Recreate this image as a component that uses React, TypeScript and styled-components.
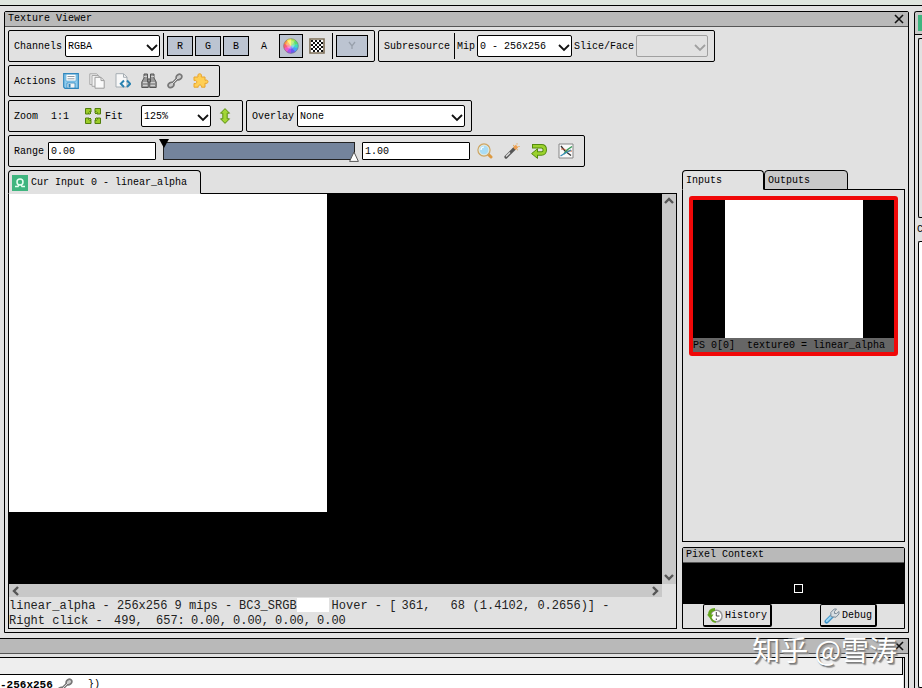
import React, { useState } from "react";
import styled, { createGlobalStyle } from "styled-components";

const GlobalStyle = createGlobalStyle`
  * { box-sizing: border-box; }
  html, body { margin: 0; height: 100%; background: #e1e1e1; }
  body, button, input, select {
    font-family: "Liberation Mono", "Noto Sans CJK SC", monospace;
    font-size: 10px;
    line-height: 14px;
    color: #000;
  }
`;

const Page = styled.div`
  position: relative;
  display: flex;
  flex-direction: column;
  height: 100vh;
  min-height: 600px;
  overflow: hidden;
`;
const TopStrip = styled.div`
  flex: none;
  height: 6px;
  background: #dfe6df;
  border-bottom: 1px solid #000;
`;
const Workspace = styled.div`
  flex: 1;
  min-height: 0;
  display: grid;
  grid-template-columns: minmax(0, 1fr) 8px;
  gap: 5px;
  padding-top: 5px;
`;
const LeftDocks = styled.div`
  display: flex;
  flex-direction: column;
  gap: 5px;
  min-height: 0;
`;
const Dock = styled.section`
  flex: 1;
  min-height: 0;
  display: flex;
  flex-direction: column;
  border: 1px solid #000;
  border-radius: 2px 2px 0 0;
  margin-left: 4px;
`;
const TitleBar = styled.header`
  flex: none;
  display: flex;
  align-items: center;
  justify-content: space-between;
  height: 15px;
  padding: 0 4px 0 3px;
  background: #b9b9b9;
  border-bottom: 1px solid #555;
`;
const Title = styled.h2`
  margin: 0;
  font-size: 10px;
  font-weight: normal;
`;
const CloseButton = styled.button`
  display: flex;
  padding: 0;
  border: 0;
  background: none;
`;
const DockBody = styled.div`
  flex: 1;
  min-height: 0;
  display: flex;
  flex-direction: column;
  gap: 3px;
  padding: 3px;
`;
const ToolRow = styled.div`
  flex: none;
  display: flex;
  gap: 3px;
`;
const ToolBox = styled.div<{ $gap?: number }>`
  display: flex;
  align-items: center;
  gap: ${(p) => p.$gap ?? 3}px;
  height: 32px;
  padding: 0 6px 0 5px;
  border: 1px solid #000;
  border-radius: 2px;
  white-space: pre;
`;
const Separator = styled.span`
  width: 1px;
  height: 26px;
  background: #000;
`;
const ButtonGroup = styled.div<{ $gap?: number }>`
  display: flex;
  align-items: center;
  gap: ${(p) => p.$gap ?? 2}px;
`;
const ToggleButton = styled.button<{ $on?: boolean; $w?: number; $h?: number }>`
  display: flex;
  align-items: center;
  justify-content: center;
  width: ${(p) => p.$w ?? 26}px;
  height: ${(p) => p.$h ?? 20}px;
  padding: ${(p) => (p.$h ? "0" : "2px 0 0")};
  background: ${(p) => (p.$on ? "#bcc4d1" : "transparent")};
  border: 1px solid ${(p) => (p.$on ? "#000" : "transparent")};
`;
const IconButton = styled.button`
  display: flex;
  align-items: center;
  padding: 0;
  border: 0;
  background: none;
`;
const SelectWrap = styled.span<{ $w: number }>`
  position: relative;
  width: ${(p) => p.$w}px;
  height: 22px;
`;
const Select = styled.select`
  appearance: none;
  display: block;
  width: 100%;
  height: 100%;
  padding: 2px 16px 0 2px;
  border: 1px solid #000;
  border-radius: 2px;
  background: #fff;
  opacity: 1;
  &:disabled { background: #e1e1e1; border-color: #a0a0a0; }
`;
const Chevron = styled.svg`
  position: absolute;
  right: 2px;
  top: 8px;
  pointer-events: none;
`;
const RangeInput = styled.input`
  width: 108px;
  height: 18px;
  padding: 0 2px;
  border: 1px solid #000;
  border-radius: 1px;
  background: #fff;
`;
const RangeBar = styled.div`
  position: relative;
  width: 192px;
  height: 18px;
  margin: 0 3px;
  background: #74849c;
  border: 1px solid #222;
`;
const RangeThumb = styled.svg<{ $end?: boolean }>`
  position: absolute;
  ${(p) => (p.$end ? "right: -5px; bottom: -3px;" : "left: -5px; top: -4px;")}
`;
const RangeSlider = styled.input<{ $end?: boolean }>`
  position: absolute;
  left: 0;
  top: ${(p) => (p.$end ? "50%" : "0")};
  width: 100%;
  height: 50%;
  margin: 0;
  opacity: 0;
`;
const Panels = styled.div`
  flex: 1;
  min-height: 0;
  display: grid;
  grid-template-columns: minmax(0, 1fr) 223px;
  gap: 5px;
`;
const Column = styled.div`
  display: flex;
  flex-direction: column;
  min-width: 0;
  min-height: 0;
`;
const Tabs = styled.div`
  flex: none;
  display: flex;
`;
const Tab = styled.button<{ $active?: boolean; $w: number; $h: number }>`
  z-index: 1;
  display: flex;
  align-items: center;
  gap: 3px;
  width: ${(p) => p.$w}px;
  height: ${(p) => p.$h}px;
  margin-bottom: -1px;
  padding: 1px 3px 0;
  border: 1px solid #000;
  border-bottom-color: ${(p) => (p.$active ? "#e1e1e1" : "#000")};
  border-radius: 4px 4px 0 0;
  background: ${(p) => (p.$active ? "#e1e1e1" : "#c9c9c9")};
  white-space: pre;
`;
const TabPanel = styled.div`
  flex: 1;
  min-height: 0;
  display: flex;
  flex-direction: column;
  border: 1px solid #000;
`;
const Scroller = styled.div`
  flex: 1;
  min-height: 0;
  display: grid;
  grid-template: minmax(0, 1fr) 13px / minmax(0, 1fr) 14px;
`;
const Viewport = styled.div`
  background: #000;
  overflow: hidden;
`;
const Texture = styled.div`
  width: 318px;
  height: 318px;
  background: #fff;
`;
const ScrollBar = styled.div<{ $vertical?: boolean }>`
  display: flex;
  flex-direction: ${(p) => (p.$vertical ? "column" : "row")};
  align-items: center;
  justify-content: space-between;
  padding: ${(p) => (p.$vertical ? "2px 0" : "0 2px")};
  background: #c8c8c8;
`;
const Status = styled.div`
  flex: none;
  padding-top: 1px;
  font-size: 12px;
  line-height: 15px;
  color: #222;
`;
const StatusLine = styled.div`
  display: flex;
  white-space: pre;
`;
const StatusText = styled.span<{ $w?: number }>`
  padding-top: 1px;
  margin-bottom: -1px;
  ${(p) => p.$w && `width: ${p.$w}px;`}
`;
const Swatch = styled.span`
  width: 32px;
  height: 14px;
  margin-right: 3px;
  background: #fff;
`;
const InputList = styled.div`
  padding: 6px;
`;
const Thumbnail = styled.button`
  display: block;
  width: 100%;
  padding: 0;
  border: 4px solid #f00808;
  border-radius: 3px;
  background: #000;
  text-align: left;
`;
const ThumbImage = styled.span`
  display: block;
  width: 138px;
  height: 138px;
  margin: 0 auto;
  background: #fff;
`;
const ThumbLabel = styled.span`
  display: block;
  height: 14px;
  padding-top: 1px;
  background: #666;
  white-space: pre;
`;
const PixelContext = styled.section`
  flex: none;
  margin-top: 5px;
  border: 1px solid #000;
  border-radius: 2px 2px 0 0;
`;
const PixelView = styled.div`
  display: flex;
  align-items: center;
  justify-content: center;
  height: 41px;
  padding: 10px 0 0 10px;
  background: #000;
`;
const PixelCursor = styled.span`
  width: 9px;
  height: 9px;
  border: 1px solid #fff;
`;
const PixelActions = styled.div`
  display: flex;
  justify-content: space-between;
  padding: 0 27px 1px 20px;
`;
const PushButton = styled.button`
  display: flex;
  align-items: center;
  gap: 2px;
  height: 23px;
  padding: 2px 3px 0;
  border: 1px solid #000;
  border-width: 1px 2px 2px 1px;
  border-radius: 2px;
  background: #e1e1e1;
`;
const LowerDock = styled.section`
  flex: none;
  height: 50px;
  display: flex;
  flex-direction: column;
  border: 1px solid #000;
  border-width: 1px 1px 0 0;
`;
const LowerBody = styled.div`
  flex: 1;
  display: flex;
  flex-direction: column;
  margin: 3px 3px 0 0;
  border: 1px solid #000;
  border-width: 1px 1px 0 0;
  padding-right: 1px;
`;
const LowerHeader = styled.div`
  flex: none;
  height: 17px;
  border: 1px solid #000;
  border-width: 0 1px 1px 0;
  background: #eee;
`;
const LowerLine = styled.div`
  flex: 1;
  display: flex;
  align-items: flex-start;
  gap: 3px;
  min-height: 0;
  padding-top: 3px;
  overflow: hidden;
  background: #fff;
  white-space: pre;
`;
const LowerName = styled.strong`
  width: 54px;
  font-size: 11px;
`;
const SideDock = styled.aside`
  display: flex;
  flex-direction: column;
  border: 1px solid #000;
  border-width: 1px 0 0 1px;
  border-radius: 3px 0 0 0;
  overflow: hidden;
`;
const SideTab = styled.div`
  flex: none;
  height: 23px;
  padding: 3px 0 0 3px;
  border-bottom: 1px solid #000;
  background: #c9c9c9;
`;
const SideMark = styled.div`
  height: 16px;
  background: #3fb57f;
`;
const SideBox = styled.div<{ $h?: number; $light?: boolean }>`
  ${(p) => (p.$h ? `flex: none; height: ${p.$h}px;` : "flex: 1;")}
  margin: 3px 0 0 3px;
  border: 1px solid #000;
  border-width: 1px 0 1px 1px;
  border-radius: 2px 0 0 2px;
  background: ${(p) => (p.$light ? "#fff" : "transparent")};
`;
const SideText = styled.div`
  flex: none;
  height: 20px;
  padding: 5px 0 0 2px;
  overflow: hidden;
`;
const Watermark = styled.div`
  position: absolute;
  right: 25px;
  bottom: 22px;
  font-family: "Noto Sans CJK SC", sans-serif;
  font-size: 28px;
  line-height: 34px;
  color: #fff;
  text-shadow: 1px 1px 1px #777, 2px 2px 1px #999;
  white-space: pre;
  pointer-events: none;
`;
const GroupLabel = styled.span`
  padding-top: 2px;
`;
const OneToOne = styled.button`
  padding: 2px 0 0;
  border: 0;
  background: none;
  margin: 0 13px 0 10px;
`;
const FitButton = styled(IconButton)`
  gap: 4px;
  margin-right: 15px;
`;
const ActionGroup = styled(ButtonGroup)`
  margin: 0 4px;
`;
const FlipGroup = styled(ButtonGroup)`
  margin: 0 3px;
`;
const RangeActions = styled(ButtonGroup)`
  margin: 0 4px 0 3px;
`;

const Icon = ({ children }: { children: React.ReactNode }) => (
  <svg width="16" height="16" viewBox="0 0 16 16" fill="none" aria-hidden="true">{children}</svg>
);
const CloseIcon = () => (
  <svg width="10" height="10" viewBox="0 0 10 10" stroke="#111" strokeWidth="1.6"><path d="M1 1L9 9M9 1L1 9" /></svg>
);
const SaveIcon = () => (
  <Icon>
    <path d="M.7.7H15.3V15.3H2L.7 14Z" fill="#8ccbee" stroke="#2f86bd" strokeWidth="1.2" />
    <path d="M3 1.3H13V8H3Z" fill="#fff" stroke="#4b9bcb" strokeWidth=".6" />
    <path d="M4.5 3.5H11.5M4.5 5.8H11.5" stroke="#8f9ba3" />
    <path d="M4 10H12V15H4Z" fill="#f2f5f7" stroke="#2f86bd" strokeWidth=".8" />
    <path d="M5.5 11H7.5V14.5H5.5Z" fill="#2f86bd" />
  </Icon>
);
const CopyIcon = () => (
  <Icon>
    <path d="M.8.8H7.5L10 3V11.5H.8Z" fill="#ededed" stroke="#a8a8a8" />
    <path d="M3 2.5H9L11 4.5V13.3H3Z" fill="#f2f2f2" stroke="#a8a8a8" />
    <path d="M6 4.3H12L15.2 7.5V15.2H6Z" fill="#fafafa" stroke="#9c9c9c" />
    <path d="M12 4.5V7.6H15" stroke="#9c9c9c" />
  </Icon>
);
const CodePageIcon = () => (
  <Icon>
    <path d="M1 .7H8.5L12 4V14H1Z" fill="#f8f8f8" stroke="#a5adb3" />
    <path d="M8.5 1V4.3H12" stroke="#a5adb3" />
    <path d="M9 7.5L5.8 10.8L9 14M12 7.5L15.2 10.8L12 14" stroke="#2a82b0" strokeWidth="2" />
  </Icon>
);
const BinocularsIcon = () => (
  <Icon>
    <path d="M3 1H6.5V5L7.3 7V14.5H.8V9L3 5ZM9.5 1H13V5L15.2 9V14.5H8.7V7L9.5 5Z" fill="#999" stroke="#555" />
    <path d="M3 3.5H6M10 3.5H13M2 9.5H6.5M9.5 9.5H14M2 12.5H6.5M9.5 12.5H14" stroke="#d0d0d0" />
    <path d="M6.5 6H9.5V9H6.5Z" fill="#888" stroke="#555" />
  </Icon>
);
const LinkIcon = () => (
  <Icon>
    <path d="M4.7 11.2L11.3 4.7" stroke="#777" strokeWidth="3" />
    <ellipse cx="4" cy="12" rx="3" ry="2.5" transform="rotate(-35 4 12)" stroke="#777" strokeWidth="1.7" fill="#ccc" />
    <ellipse cx="12" cy="4" rx="3" ry="2.5" transform="rotate(-35 12 4)" stroke="#777" strokeWidth="1.7" fill="#ccc" />
    <path d="M5 11L11 5" stroke="#ddd" />
  </Icon>
);
const PuzzleIcon = () => (
  <Icon>
    <path d="M1 4H5V3C4.5 1.5 5.5.8 6.7.8S9 1.7 8.3 3V4H12V7.3C13.5 6.5 15 7.3 15 8.7S13.5 10.8 12 10.2V14.2H8.5C8.7 12.7 8 12 7 12S5 12.7 5.2 14.2H1V10.5C3 11 3.7 10 3.7 9S3 7 1 7.5Z" fill="#ffcf55" stroke="#e9a42c" />
  </Icon>
);
const FitIcon = () => (
  <Icon>
    {[[0, 0, 0], [16, 0, 90], [16, 16, 180], [0, 16, 270]].map(([x, y, r]) => (
      <g key={r} transform={`translate(${x} ${y}) rotate(${r})`}>
        <path d="M.5 .5H6V4L4.5 3.5L6 5L4.8 6.2L3.2 4.8L3.8 6H.5Z" fill="#9ccc28" stroke="#527f0c" />
      </g>
    ))}
  </Icon>
);
const UpDownIcon = () => (
  <Icon>
    <path d="M8 .6L12.5 5.2H10.2V10.8H12.5L8 15.4L3.5 10.8H5.8V5.2H3.5Z" fill="#a3d636" stroke="#5b8f11" />
  </Icon>
);
const ZoomIcon = () => (
  <Icon>
    <path d="M11 11L14 14" stroke="#dd9a42" strokeWidth="3" strokeLinecap="round" />
    <circle cx="7" cy="7" r="6" fill="#a9dcf5" stroke="#cfa766" strokeWidth="1.4" />
    <circle cx="7" cy="7" r="4.9" stroke="#f6f0dc" strokeWidth=".8" />
    <path d="M4 7C4 5 5.5 4 7 4" stroke="#fff" strokeWidth="1.2" />
  </Icon>
);
const WandIcon = () => (
  <Icon>
    <path d="M2 14L11 5" stroke="#555" strokeWidth="3.2" strokeLinecap="round" />
    <path d="M2 13.5L6 9.5" stroke="#ddd" strokeWidth="1.4" />
    <path d="M10.3 5.7L13 3" stroke="#f0a050" strokeWidth="3.6" />
    <path d="M9 2L10.5 3.2M13 .3V1.6M15.7 3.5H14.4M12.7 6L14 7.3" stroke="#e6aa55" />
  </Icon>
);
const ReturnIcon = () => (
  <Icon>
    <path d="M1 3.3H10.5C13 3.3 13.8 5 13.8 7S12.5 10.5 10.5 10.5H6" stroke="#548b0d" strokeWidth="4.4" />
    <path d="M6.5 5.8V15.4L.6 10.6Z" fill="#9bd22d" stroke="#548b0d" />
    <path d="M2 3.3H10.5C13 3.3 13.8 5 13.8 7S12.5 10.5 10.5 10.5H5" stroke="#9bd22d" strokeWidth="2.4" />
  </Icon>
);
const HistogramIcon = () => (
  <Icon>
    <path d="M1 1H15V15H1Z" fill="#fafafa" stroke="#858585" />
    <path d="M3 3L7 8L13 12.5" stroke="#333" strokeWidth="1.3" />
    <path d="M3 6H6L9 8H14" stroke="#c65a36" />
    <path d="M6 11L9 7L14 3.5" stroke="#3a9b58" strokeWidth="1.5" />
    <path d="M2.5 13L6.5 10.5L13 7" stroke="#348bb8" strokeWidth="1.2" />
  </Icon>
);
const wheelColours = ["#a8e94a", "#5be06a", "#3cdcc0", "#45a5f5", "#6a5cf2", "#a552ef", "#f456c5", "#ff5d70", "#ff9a3b", "#fff04a"];
const WheelIcon = () => (
  <Icon>
    {wheelColours.map((c, i) => {
      const a = (i * Math.PI) / 5 - Math.PI / 2;
      const b = a + Math.PI / 5 + 0.03;
      return <path key={c} fill={c} d={`M8 8L${8 + 7.5 * Math.cos(a)} ${8 + 7.5 * Math.sin(a)}A7.5 7.5 0 0 1 ${8 + 7.5 * Math.cos(b)} ${8 + 7.5 * Math.sin(b)}Z`} />;
    })}
    <circle cx="7.5" cy="6.5" r="4.2" fill="#fff" opacity=".3" />
    <circle cx="8" cy="8" r="7.3" stroke="#777" strokeOpacity=".6" />
  </Icon>
);
const CheckerIcon = () => (
  <Icon>
    <path d="M1 1H15V15H1Z" fill="#fff" stroke="#7c6d55" strokeWidth="1.6" />
    {Array.from({ length: 36 }, (_, i) => i)
      .filter((i) => ((i % 6) + Math.floor(i / 6)) % 2 === 0)
      .map((i) => <rect key={i} x={2 + (i % 6) * 2} y={2 + Math.floor(i / 6) * 2} width="2" height="2" fill="#111" />)}
  </Icon>
);
const BadgeIcon = () => (
  <Icon>
    <path d="M0 0H16V16H0Z" fill="#3fb57f" />
    <circle cx="8" cy="7" r="3" stroke="#e8fff2" strokeWidth="1.5" />
    <path d="M3 11.5H6L7 9.5M13 11.5H10L9 9.5" stroke="#e8fff2" strokeWidth="1.5" />
  </Icon>
);
const HistoryIcon = () => (
  <Icon>
    <circle cx="9.3" cy="8" r="5.8" fill="#fff" stroke="#999" strokeWidth="1.5" />
    <path d="M9.3 4V8H12.5M9.3 10.5V12" stroke="#444" />
    <path d="M8 1.5C4 1.5 2.5 4 2.5 7" stroke="#62a51b" strokeWidth="3" />
    <path d="M0 6.5H6.5L3.5 11Z" fill="#62a51b" />
    <path d="M4 10C5 13 7 14 9 14" stroke="#62a51b" strokeWidth="1.6" />
  </Icon>
);
const WrenchIcon = () => (
  <Icon>
    <path d="M2.6 13.4L8.5 7.5" stroke="#3d91c7" strokeWidth="4.2" strokeLinecap="round" />
    <path d="M2.8 13L8 7.8" stroke="#9bd8f7" strokeWidth="2" strokeLinecap="round" />
    <path d="M7 8.7L6.8 4.5L10.2 1H12.5L10.5 3.5V5.5H12.5L15 3.5V6L12 9.2Z" fill="#d7dde2" stroke="#7c8b98" />
  </Icon>
);
const scrollPaths = { up: "M1 7L5 3L9 7", down: "M1 3L5 7L9 3", left: "M7 1L3 5L7 9", right: "M3 1L7 5L3 9" };
const ScrollArrow = ({ dir }: { dir: keyof typeof scrollPaths }) => (
  <svg width="10" height="10" viewBox="0 0 10 10" fill="none" stroke="#555" strokeWidth="2.4"><path d={scrollPaths[dir]} /></svg>
);

type DropDownProps = { label: string; options: string[]; width: number; disabled?: boolean };
const DropDown = ({ label, options, width, disabled }: DropDownProps) => (
  <SelectWrap $w={width}>
    <Select aria-label={label} disabled={disabled}>
      {options.map((o) => <option key={o}>{o}</option>)}
    </Select>
    <Chevron width="12" height="9" viewBox="0 0 12 9" fill="none" stroke={disabled ? "#a0a0a0" : "#111"} strokeWidth="1.8">
      <path d="M1 2L6 7L11 2" />
    </Chevron>
  </SelectWrap>
);

const actions = [
  { name: "Save texture", icon: <SaveIcon /> },
  { name: "Copy", icon: <CopyIcon /> },
  { name: "View code", icon: <CodePageIcon /> },
  { name: "Find", icon: <BinocularsIcon /> },
  { name: "Open link", icon: <LinkIcon /> },
  { name: "Extensions", icon: <PuzzleIcon /> },
];
const rangeActions = [
  { name: "Zoom to range", icon: <ZoomIcon /> },
  { name: "Autofit range", icon: <WandIcon /> },
  { name: "Reset range", icon: <ReturnIcon /> },
  { name: "Show histogram", icon: <HistogramIcon /> },
];

export default function App() {
  const [low, setLow] = useState("0.00");
  const [high, setHigh] = useState("1.00");
  return (
    <Page>
      <GlobalStyle />
      <TopStrip />
      <Workspace>
        <LeftDocks>
          <Dock>
            <TitleBar><Title>Texture Viewer</Title><CloseButton aria-label="Close"><CloseIcon /></CloseButton></TitleBar>
            <DockBody>
              <ToolRow>
                <ToolBox>
                  <GroupLabel>Channels</GroupLabel>
                  <DropDown label="Channels" options={["RGBA"]} width={95} />
                  <Separator />
                  <ButtonGroup>
                    <ToggleButton $on>R</ToggleButton>
                    <ToggleButton $on>G</ToggleButton>
                    <ToggleButton $on>B</ToggleButton>
                    <ToggleButton>A</ToggleButton>
                    <ToggleButton $on $w={24} $h={24} aria-label="Colour background"><WheelIcon /></ToggleButton>
                    <ToggleButton $w={24} $h={24} aria-label="Checkerboard"><CheckerIcon /></ToggleButton>
                  </ButtonGroup>
                  <Separator />
                  <ToggleButton $on $w={32} $h={22} disabled aria-label="Gamma">
                    <svg width="10" height="10" viewBox="0 0 10 10" fill="none" stroke="#98a0ab" strokeWidth="1.3"><path d="M2 1L5 5L8 1M5 5V8" /></svg>
                  </ToggleButton>
                </ToolBox>
                <ToolBox $gap={4}>
                  <GroupLabel>Subresource</GroupLabel>
                  <ButtonGroup>
                    <Separator />
                    <GroupLabel>Mip</GroupLabel>
                    <DropDown label="Mip" options={["0 - 256x256"]} width={95} />
                    <GroupLabel>Slice/Face</GroupLabel>
                    <DropDown label="Slice/Face" options={[""]} width={72} disabled />
                  </ButtonGroup>
                </ToolBox>
              </ToolRow>
              <ToolRow>
                <ToolBox>
                  <GroupLabel>Actions</GroupLabel>
                  <ActionGroup $gap={10}>
                    {actions.map((a) => <IconButton key={a.name} aria-label={a.name}>{a.icon}</IconButton>)}
                  </ActionGroup>
                </ToolBox>
              </ToolRow>
              <ToolRow>
                <ToolBox>
                  <GroupLabel>Zoom</GroupLabel>
                  <OneToOne>1:1</OneToOne>
                  <FitButton><FitIcon /><GroupLabel>Fit</GroupLabel></FitButton>
                  <DropDown label="Zoom" options={["125%"]} width={70} />
                  <FlipGroup><IconButton aria-label="Flip vertically"><UpDownIcon /></IconButton></FlipGroup>
                </ToolBox>
                <ToolBox>
                  <GroupLabel>Overlay</GroupLabel>
                  <DropDown label="Overlay" options={["None"]} width={168} />
                </ToolBox>
              </ToolRow>
              <ToolRow>
                <ToolBox $gap={4}>
                  <GroupLabel>Range</GroupLabel>
                  <RangeInput aria-label="Range minimum" value={low} onChange={(e) => setLow(e.target.value)} />
                  <RangeBar>
                    <RangeThumb width="10" height="9" viewBox="0 0 10 9"><path d="M0 0H10L5 9Z" fill="#000" /></RangeThumb>
                    <RangeThumb $end width="10" height="11" viewBox="0 0 10 11"><path d="M5 1L9.4 10.4H.6Z" fill="#fff" stroke="#555" /></RangeThumb>
                    <RangeSlider type="range" aria-label="Black point" min="0" max="1" step="0.01" value={low} onChange={(e) => setLow(e.target.value)} />
                    <RangeSlider $end type="range" aria-label="White point" min="0" max="1" step="0.01" value={high} onChange={(e) => setHigh(e.target.value)} />
                  </RangeBar>
                  <RangeInput aria-label="Range maximum" value={high} onChange={(e) => setHigh(e.target.value)} />
                  <RangeActions $gap={11}>
                    {rangeActions.map((a) => <IconButton key={a.name} aria-label={a.name}>{a.icon}</IconButton>)}
                  </RangeActions>
                </ToolBox>
              </ToolRow>
              <Panels>
                <Column>
                  <Tabs><Tab $active $w={193} $h={24}><BadgeIcon />Cur Input 0 - linear_alpha</Tab></Tabs>
                  <TabPanel>
                    <Scroller>
                      <Viewport><Texture /></Viewport>
                      <ScrollBar $vertical><ScrollArrow dir="up" /><ScrollArrow dir="down" /></ScrollBar>
                      <ScrollBar><ScrollArrow dir="left" /><ScrollArrow dir="right" /></ScrollBar>
                    </Scroller>
                    <Status>
                      <StatusLine>
                        <StatusText $w={108}>linear_alpha -</StatusText>
                        <StatusText $w={122}>256x256 9 mips -</StatusText>
                        <StatusText>BC3_SRGB</StatusText>
                        <Swatch />
                        <StatusText $w={70}>Hover - [</StatusText>
                        <StatusText $w={49}>361,</StatusText>
                        <StatusText $w={22}>68</StatusText>
                        <StatusText>(1.4102, 0.2656)] -</StatusText>
                      </StatusLine>
                      <StatusLine>
                        <StatusText $w={105}>Right click -</StatusText>
                        <StatusText $w={42}>499,</StatusText>
                        <StatusText $w={35}>657:</StatusText>
                        <StatusText $w={42}>0.00,</StatusText>
                        <StatusText $w={42}>0.00,</StatusText>
                        <StatusText $w={42}>0.00,</StatusText>
                        <StatusText>0.00</StatusText>
                      </StatusLine>
                    </Status>
                  </TabPanel>
                </Column>
                <Column>
                  <Tabs>
                    <Tab $active $w={82} $h={20}>Inputs</Tab>
                    <Tab $w={84} $h={20}>Outputs</Tab>
                  </Tabs>
                  <TabPanel>
                    <InputList>
                      <Thumbnail>
                        <ThumbImage />
                        <ThumbLabel>PS 0[0]  texture0 = linear_alpha</ThumbLabel>
                      </Thumbnail>
                    </InputList>
                  </TabPanel>
                  <PixelContext>
                    <TitleBar><Title>Pixel Context</Title></TitleBar>
                    <PixelView><PixelCursor /></PixelView>
                    <PixelActions>
                      <PushButton><HistoryIcon />History</PushButton>
                      <PushButton><WrenchIcon />Debug</PushButton>
                    </PixelActions>
                  </PixelContext>
                </Column>
              </Panels>
            </DockBody>
          </Dock>
          <LowerDock>
            <TitleBar><Title /><CloseButton aria-label="Close"><CloseIcon /></CloseButton></TitleBar>
            <LowerBody>
              <LowerHeader />
              <LowerLine><LowerName>-256x256</LowerName><LinkIcon /><span>  {"})"}</span></LowerLine>
            </LowerBody>
          </LowerDock>
        </LeftDocks>
        <SideDock>
          <SideTab><SideMark /></SideTab>
          <SideBox $h={180} />
          <SideText>C</SideText>
          <SideBox $light />
        </SideDock>
      </Workspace>
      <Watermark>知乎 @雪涛</Watermark>
    </Page>
  );
}
